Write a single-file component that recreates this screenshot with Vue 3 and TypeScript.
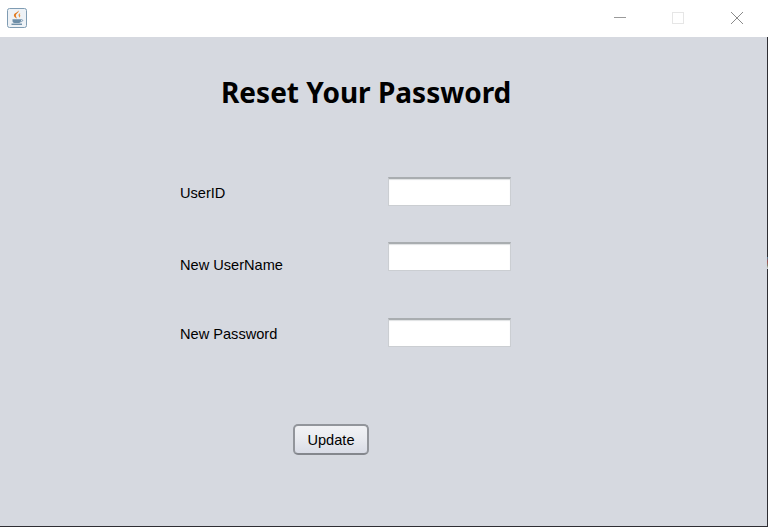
<script setup lang="ts">
interface Field { label: string; rowClass: string }
const fields: Field[] = [
  { label: 'UserID', rowClass: 'row-user' },
  { label: 'New UserName', rowClass: 'row-name' },
  { label: 'New Password', rowClass: 'row-pass' },
]
</script>

<template>
  <div class="window">
    <header class="titlebar">
      <svg class="app-icon" width="20" height="20" viewBox="0 0 20 20">
        <rect x="0.5" y="0.5" width="19" height="19" rx="2" fill="#eef2f6" stroke="#7f9cb3" />
        <path d="M11.500 2.500c.8 2-2.800 3.200-2.600 5.300.1 1.100.7 1.700 1.100 2.700-2.300-.9-3.600-2.300-3-4 .6-1.600 3.700-1.900 4.500-4z" fill="#e27a1f" />
        <path d="M13.400 5c-1.300.8-2.200 1.500-1.800 2.600.2.700.6 1.200.5 2.100 1.100-.8 1.500-1.700 1-2.600-.4-.7-.2-1.300.3-2.100z" fill="#ee9440" />
        <path d="M5.500 11.200h8.500v1.900c0 1.200-.9 1.900-2 1.900H7.500c-1.100 0-2-.7-2-1.900z" fill="#6d8ea8" />
        <path d="M14 11.700h1c1.100 0 1.100 1.900-.9 2" fill="none" stroke="#6d8ea8" stroke-width=".8" />
        <path d="M4.500 16.200h10.500" stroke="#47708f" stroke-width="1.100" />
      </svg>
      <div class="controls">
        <svg width="14" height="14" viewBox="0 0 14 14"><path d="M0 6.500h12" stroke="#9a9a9a" stroke-width="1" /></svg>
        <svg width="14" height="14" viewBox="0 0 14 14"><rect x="0.500" y="1.500" width="11" height="11" fill="none" stroke="#e6e6e6" /></svg>
        <svg width="14" height="14" viewBox="0 0 14 14"><path d="M1 1l12 12M13 1L1 13" stroke="#8a8a8a" stroke-width="1" /></svg>
      </div>
    </header>
    <main class="content">
      <h1 class="title">Reset Your Password</h1>
      <div v-for="f in fields" :key="f.label" class="row" :class="f.rowClass">
        <label class="label">{{ f.label }}</label>
        <div class="field"></div>
      </div>
      <button class="update" type="button">Update</button>
      <span class="speck"></span>
    </main>
  </div>
</template>

<style scoped>
.window {
  width: 768px;
  height: 527px;
  display: flex;
  flex-direction: column;
  overflow: hidden;
  font-family: "Liberation Sans", Arial, sans-serif;
}
.titlebar {
  height: 37px;
  flex: none;
  background: #ffffff;
  display: flex;
  align-items: flex-start;
  justify-content: space-between;
  padding: 8px 24px 0 7px;
  box-sizing: border-box;
}
.app-icon { display: block; }
.controls {
  display: flex;
  gap: 44px;
  margin-top: 3px;
}
.controls svg { display: block; }
.content {
  position: relative;
  flex: 1;
  background: #d6d9e0;
  border-right: 1px solid #2e2e33;
  border-bottom: 1px solid #2e2e33;
  padding: 0 0 0 180px;
}
.title {
  margin: 37px 0 0 41px;
  font-family: "Noto Sans", sans-serif;
  font-size: 28px;
  line-height: 37px;
  font-weight: 700;
  color: #000;
  white-space: nowrap;
}
.row {
  display: flex;
  align-items: flex-start;
}
.row-user { margin-top: 66px; }
.row-name { margin-top: 36px; }
.row-pass { margin-top: 44px; }
.label {
  width: 208px;
  flex: none;
  font-size: 14.6px;
  line-height: 18px;
  color: #000;
}
.row-user .label { margin-top: 7px; }
.row-name .label { margin-top: 14px; }
.row-pass .label { margin-top: 7px; }
.field {
  width: 123px;
  height: 29px;
  box-sizing: border-box;
  background: #ffffff;
  border: 1px solid #cbced2;
  border-top: 2px solid #a9adb0;
  box-shadow: inset 0 1px 1px #dfe1e3;
}
.update {
  display: block;
  margin: 77px 0 0 113px;
  width: 76px;
  height: 31px;
  padding: 0;
  box-sizing: border-box;
  border: 2px solid #92959b;
  border-bottom-color: #84878d;
  border-radius: 5px;
  background: linear-gradient(#f1f2f5, #e9ebf0 45%, #d9dce6);
  font-family: "Liberation Sans", Arial, sans-serif;
  font-size: 14.6px;
  color: #000;
}
.speck {
  position: absolute;
  right: -1px;
  top: 220px;
  width: 1px;
  height: 12px;
  background: linear-gradient(#4a7a95, #a05050 40%, #80806a 70%, #d6d9e0);
}
</style>
